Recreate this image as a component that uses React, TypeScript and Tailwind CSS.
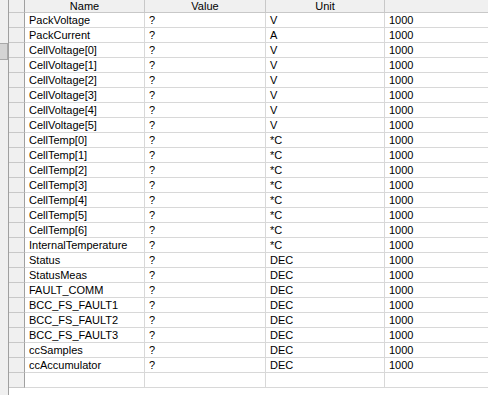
import React from "react";

type Row = {
  name: string;
  unit: string;
};

const rows: Row[] = [
  { name: "PackVoltage", unit: "V" },
  { name: "PackCurrent", unit: "A" },
  { name: "CellVoltage[0]", unit: "V" },
  { name: "CellVoltage[1]", unit: "V" },
  { name: "CellVoltage[2]", unit: "V" },
  { name: "CellVoltage[3]", unit: "V" },
  { name: "CellVoltage[4]", unit: "V" },
  { name: "CellVoltage[5]", unit: "V" },
  { name: "CellTemp[0]", unit: "*C" },
  { name: "CellTemp[1]", unit: "*C" },
  { name: "CellTemp[2]", unit: "*C" },
  { name: "CellTemp[3]", unit: "*C" },
  { name: "CellTemp[4]", unit: "*C" },
  { name: "CellTemp[5]", unit: "*C" },
  { name: "CellTemp[6]", unit: "*C" },
  { name: "InternalTemperature", unit: "*C" },
  { name: "Status", unit: "DEC" },
  { name: "StatusMeas", unit: "DEC" },
  { name: "FAULT_COMM", unit: "DEC" },
  { name: "BCC_FS_FAULT1", unit: "DEC" },
  { name: "BCC_FS_FAULT2", unit: "DEC" },
  { name: "BCC_FS_FAULT3", unit: "DEC" },
  { name: "ccSamples", unit: "DEC" },
  { name: "ccAccumulator", unit: "DEC" },
];

const grid = "grid grid-cols-[16px_120px_121px_119px_1fr]";
const cell = "h-[15px] border-r border-b border-[#d8d8d8] pl-[4px] leading-[14px] whitespace-nowrap overflow-hidden";
const head = "h-[13px] border-r border-b border-[#c8c8c8] bg-[#f0f0f0] text-center leading-[12px]";

export default function App() {
  return (
    <div
      className="flex h-[395px] w-[488px] overflow-hidden bg-white text-[11px] text-black"
      style={{ fontFamily: '"Liberation Sans", Arial, sans-serif' }}
    >
      <div className="flex w-[9px] shrink-0 flex-col border-r border-[#a0a0a0] bg-[#f0f0f0]">
        <div className="mt-[43px] h-[17px] w-[8px] border-y border-r border-[#a8a8a8] bg-[#d4d4d4]" />
      </div>

      <div className="flex-1">
        <div className={grid}>
          <div className={`${head} border-r-[#a0a0a0]`} />
          <div className={head}>Name</div>
          <div className={head}>Value</div>
          <div className={head}>Unit</div>
          <div className={`${head} border-r-0`} />
        </div>

        {[...rows, { name: "", unit: "" }].map((r, i) => (
          <div key={i} className={grid}>
            <div className="h-[15px] border-r border-b border-r-[#a0a0a0] border-b-[#c8c8c8] bg-[#f0f0f0]" />
            <div className={cell}>{r.name}</div>
            <div className={cell}>{r.name ? "?" : ""}</div>
            <div className={cell}>{r.unit}</div>
            <div className={`${cell} border-r-0`}>{r.name ? "1000" : ""}</div>
          </div>
        ))}
      </div>
    </div>
  );
}
